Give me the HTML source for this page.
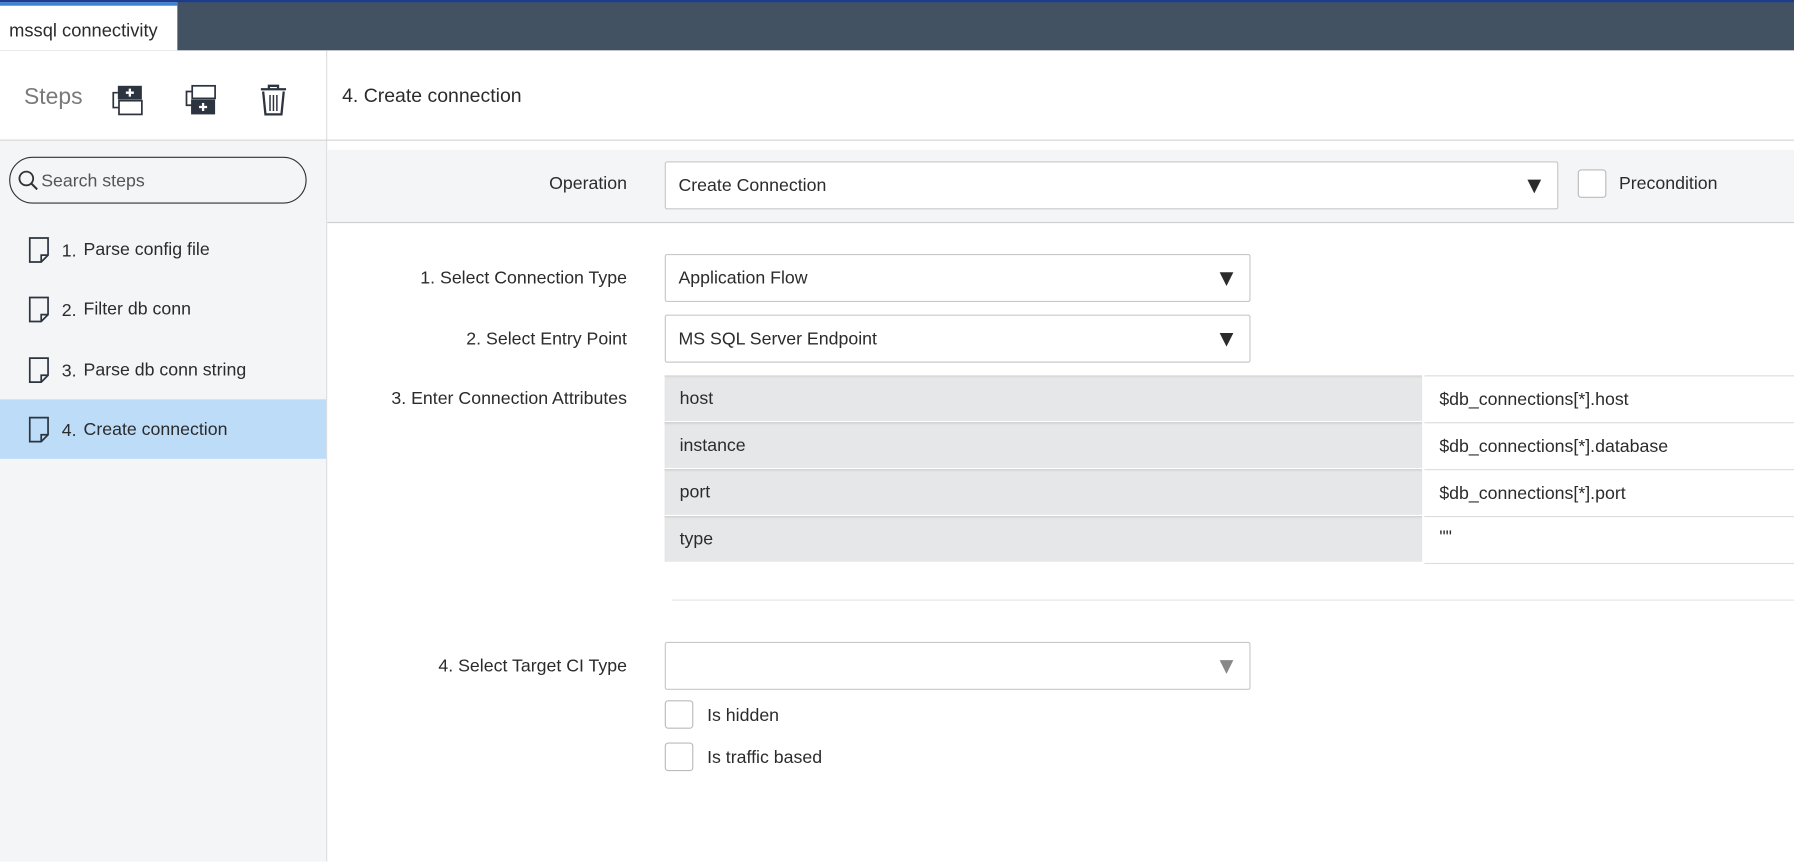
<!DOCTYPE html>
<html><head><meta charset="utf-8"><style>
html,body{margin:0;padding:0;width:1794px;height:861px;overflow:hidden;background:#fff;}
#w{position:absolute;left:0;top:0;width:1568px;height:753px;transform:scale(1.14413);transform-origin:0 0;font-family:"Liberation Sans",sans-serif;color:#2b2b2b;font-size:15.5px;}
.a{position:absolute;}
.dd{position:absolute;background:#fff;border:1px solid #c8c8c8;border-radius:2px;box-sizing:border-box;}
.dd span{position:absolute;left:11px;top:12px;}
.tri{position:absolute;right:14px;top:15px;width:0;height:0;border-left:6px solid transparent;border-right:6px solid transparent;border-top:12px solid #2b2b2b;}
.lbl{position:absolute;right:1020px;text-align:right;white-space:nowrap;}
.cb{position:absolute;width:25px;height:25px;border:1px solid #bbb;border-radius:3px;background:#fff;box-sizing:border-box;}
.row{position:absolute;left:581px;width:987px;height:40px;}
.k{position:absolute;left:0;top:0;width:662px;height:40px;background:#e6e7e8;box-shadow:inset 0 2px 2px -1px #ccc;}
.k span,.v span{position:absolute;left:13px;top:12px;}
.v{position:absolute;left:664px;top:0;right:0;height:40px;background:#fff;border-top:1px solid #ddd;border-bottom:1px solid #ddd;}
.it{position:absolute;left:0;width:285px;height:52px;}
.it svg{position:absolute;left:25px;top:15px;}
.it .n{position:absolute;left:54px;top:19px;}
.it .t{position:absolute;left:73px;top:18px;}
</style></head><body><div id="w">
<div class="a" style="left:0;top:0;width:1568px;height:44px;background:#435263;border-top:2px solid #1d3d8c;box-sizing:border-box"></div>
<div class="a" style="left:0;top:2px;width:155px;height:42px;background:#fff;border-top:3px solid #3b82d6;box-sizing:border-box"><span class="a" style="left:8px;top:14px;font-size:16px">mssql connectivity</span></div>
<div class="a" style="left:0;top:123px;width:285px;height:630px;background:#f4f5f6"></div>
<div class="a" style="left:285px;top:44px;width:1px;height:709px;background:#ddd"></div>
<div class="a" style="left:0;top:122px;width:1568px;height:1px;background:#d4d4d4"></div>
<span class="a" style="left:21px;top:74px;font-size:20px;color:#7a7a7a">Steps</span>
<svg class="a" style="left:97px;top:72px" width="32" height="30" viewBox="0 0 32 30"><rect x="6" y="3" width="21" height="12" fill="#2c3440"/><path d="M16.5 5.5v7M13 9h7" stroke="#fff" stroke-width="2"/><path d="M6 9H2v13h5" fill="none" stroke="#2c3440" stroke-width="1.5"/><rect x="7" y="16" width="20" height="12" fill="#fff" stroke="#2c3440" stroke-width="1.5"/></svg>
<svg class="a" style="left:161px;top:72px" width="32" height="30" viewBox="0 0 32 30"><rect x="7" y="3" width="20" height="11" fill="#fff" stroke="#2c3440" stroke-width="1.5"/><path d="M7 8H2v12h5" fill="none" stroke="#2c3440" stroke-width="1.5"/><rect x="6" y="15" width="21" height="13" fill="#2c3440"/><path d="M16.5 18v7M13 21.5h7" stroke="#fff" stroke-width="2"/></svg>
<svg class="a" style="left:226px;top:73px" width="26" height="30" viewBox="0 0 26 30"><path d="M2 5h22M9 5V2h8v3" fill="none" stroke="#2c3440" stroke-width="2"/><path d="M4 7l2 20h14l2-20" fill="none" stroke="#2c3440" stroke-width="2"/><path d="M10 10v14M13 10v14M16 10v14" stroke="#2c3440" stroke-width="1.3"/></svg>
<div class="a" style="left:8px;top:137px;width:260px;height:41px;border:1px solid #333;border-radius:21px;box-sizing:border-box;background:#f4f5f6"></div>
<svg class="a" style="left:15px;top:148px" width="20" height="20" viewBox="0 0 20 20"><circle cx="8" cy="8" r="6" fill="none" stroke="#333" stroke-width="1.6"/><path d="M12.5 12.5l5 5" stroke="#333" stroke-width="1.8"/></svg>
<span class="a" style="left:36px;top:150px;color:#555">Search steps</span>
<div class="it" style="top:192px"><svg width="20" height="23" viewBox="0 0 20 23"><path d="M1 1h16v15l-6 6H1z M17 16h-6v6" fill="none" stroke="#2c3440" stroke-width="1.5"/></svg><span class="n">1.</span><span class="t">Parse config file</span></div>
<div class="it" style="top:244px"><svg width="20" height="23" viewBox="0 0 20 23"><path d="M1 1h16v15l-6 6H1z M17 16h-6v6" fill="none" stroke="#2c3440" stroke-width="1.5"/></svg><span class="n">2.</span><span class="t">Filter db conn</span></div>
<div class="it" style="top:297px"><svg width="20" height="23" viewBox="0 0 20 23"><path d="M1 1h16v15l-6 6H1z M17 16h-6v6" fill="none" stroke="#2c3440" stroke-width="1.5"/></svg><span class="n">3.</span><span class="t">Parse db conn string</span></div>
<div class="it" style="top:349px;background:#bddcf8"><svg width="20" height="23" viewBox="0 0 20 23"><path d="M1 1h16v15l-6 6H1z M17 16h-6v6" fill="none" stroke="#2c3440" stroke-width="1.5"/></svg><span class="n">4.</span><span class="t">Create connection</span></div>
<span class="a" style="left:299px;top:74px;font-size:17px">4. Create connection</span>
<div class="a" style="left:286px;top:131px;width:1282px;height:64px;background:#f4f5f6;border-bottom:1px solid #d0d0d0;box-sizing:border-box"></div>
<span class="lbl" style="top:152px">Operation</span>
<div class="dd" style="left:581px;top:141px;width:781px;height:42px"><span>Create Connection</span><div class="tri"></div></div>
<div class="cb" style="left:1379px;top:148px"></div>
<span class="a" style="left:1415px;top:152px">Precondition</span>
<span class="lbl" style="top:235px">1. Select Connection Type</span>
<div class="dd" style="left:581px;top:222px;width:512px;height:42px"><span>Application Flow</span><div class="tri"></div></div>
<span class="lbl" style="top:288px">2. Select Entry Point</span>
<div class="dd" style="left:581px;top:275px;width:512px;height:42px"><span>MS SQL Server Endpoint</span><div class="tri"></div></div>
<span class="lbl" style="top:340px">3. Enter Connection Attributes</span>
<div class="row" style="top:328px"><div class="k"><span>host</span></div><div class="v"><span>$db_connections[*].host</span></div></div>
<div class="row" style="top:369px"><div class="k"><span>instance</span></div><div class="v"><span>$db_connections[*].database</span></div></div>
<div class="row" style="top:410px"><div class="k"><span>port</span></div><div class="v"><span>$db_connections[*].port</span></div></div>
<div class="row" style="top:451px"><div class="k"><span>type</span></div><div class="v"><span style="top:9px">""</span></div></div>
<div class="a" style="left:587px;top:524px;width:981px;height:1px;background:#e4e4e4"></div>
<span class="lbl" style="top:574px">4. Select Target CI Type</span>
<div class="dd" style="left:581px;top:561px;width:512px;height:42px"><div class="tri" style="border-top-color:#888"></div></div>
<div class="cb" style="left:581px;top:612px"></div><span class="a" style="left:618px;top:617px">Is hidden</span>
<div class="cb" style="left:581px;top:649px"></div><span class="a" style="left:618px;top:654px">Is traffic based</span>
</div></body></html>
